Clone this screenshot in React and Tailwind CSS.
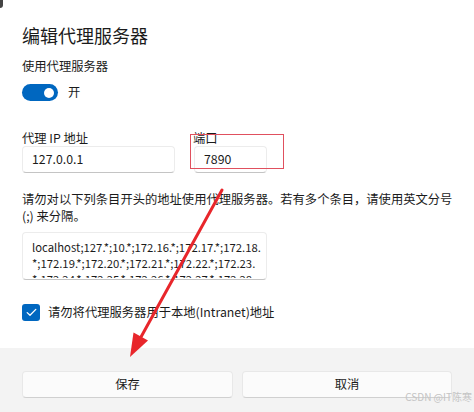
import React from "react";

const font = { fontFamily: '"Noto Sans CJK SC", "Noto Sans", sans-serif' };

function Toggle() {
  return (
    <div className="flex items-center">
      <div className="w-[36px] h-[17px] rounded-full bg-[#0067c0] flex items-center justify-end pr-[4px]">
        <div className="w-[10px] h-[10px] rounded-full bg-white" />
      </div>
      <span className="ml-[10px] text-[12.3px] leading-[17px]">开</span>
    </div>
  );
}

function TextBox({ value, className }) {
  return (
    <div
      className={`h-[27px] bg-white rounded-[4px] border border-[#ececec] border-b-[#c4c4c4] flex items-center pl-[9px] text-[12.3px] ${className}`}
    >
      {value}
    </div>
  );
}

function Arrow() {
  return (
    <svg className="absolute inset-0 pointer-events-none" width="474" height="412" viewBox="0 0 474 412">
      <line x1="222" y1="190" x2="141" y2="337" stroke="#e8262b" strokeWidth="3" strokeLinecap="round" />
      <polygon points="130,357 133.5,332.5 148,340.5" fill="#e8262b" />
    </svg>
  );
}

export default function App() {
  return (
    <div className="relative w-[474px] h-[412px] bg-white overflow-hidden text-[#1b1b1b]" style={font}>
      <div className="h-[348px] px-[22px] pt-[23px]">
        <h1 className="text-[18px] leading-[24px]">编辑代理服务器</h1>
        <div className="mt-[10px] text-[12.3px] leading-[18px]">使用代理服务器</div>
        <div className="mt-[9px]">
          <Toggle />
        </div>

        <div className="mt-[30px] flex">
          <div className="w-[153px]">
            <div className="text-[12.3px] leading-[15px] h-[15px]">代理 IP 地址</div>
            <TextBox value="127.0.0.1" />
          </div>
          <div className="ml-[19px] w-[73px]">
            <div className="text-[12.3px] leading-[15px] h-[15px] -ml-[1px]">端口</div>
            <TextBox value="7890" />
          </div>
        </div>

        <p className="mt-[18px] text-[12.3px] leading-[16.5px] whitespace-nowrap">
          请勿对以下列条目开头的地址使用代理服务器。若有多个条目，请使用英文分号
          <br />
          (;) 来分隔。
        </p>

        <div className="mt-[8px] w-[245px] h-[48px] bg-white rounded-[4px] border border-[#ececec] border-b-[#c4c4c4] pl-[9px] pr-[4px] pt-[6px]">
          <div className="h-[39px] overflow-hidden text-[11.3px] leading-[16px] whitespace-nowrap">
            <div>localhost;127.*;10.*;172.16.*;172.17.*;172.18.</div>
            <div>*;172.19.*;172.20.*;172.21.*;172.22.*;172.23.</div>
            <div>*;172.24.*;172.25.*;172.26.*;172.27.*;172.28.</div>
          </div>
        </div>

        <div className="mt-[24px] flex items-center">
          <div className="w-[18px] h-[17px] rounded-[3px] bg-[#0067c0] flex items-center justify-center">
            <svg width="11" height="9" viewBox="0 0 11 9">
              <path d="M1.2 4.6 L4 7.3 L9.8 1.4" fill="none" stroke="white" strokeWidth="1.3" strokeLinecap="round" strokeLinejoin="round" />
            </svg>
          </div>
          <span className="ml-[8px] text-[12.3px] leading-[17px]">请勿将代理服务器用于本地(Intranet)地址</span>
        </div>
      </div>

      <div className="h-[64px] bg-[#f3f3f3] px-[22px] pt-[23px] flex gap-[9px]">
        <button className="w-[211px] h-[27px] rounded-[4px] bg-[#fbfbfb] border border-[#e8e8e8] border-b-[#d0d0d0] text-[12.3px]">
          保存
        </button>
        <button className="w-[210px] h-[27px] rounded-[4px] bg-[#fbfbfb] border border-[#e8e8e8] border-b-[#d0d0d0] text-[12.3px]">
          取消
        </button>
      </div>

      {/* annotation box around the port field */}
      <div className="absolute left-[190px] top-[134px] w-[94px] h-[35px] border border-[#e0505e]" />
      <Arrow />

      <div className="absolute left-0 top-0 w-[3px] h-[8px] bg-[#444] rounded-br-[3px]" />
      <div className="absolute right-[2px] bottom-[9px] text-[10px] leading-[12px] text-[#c4c4c4]">CSDN @IT陈寒</div>
    </div>
  );
}
